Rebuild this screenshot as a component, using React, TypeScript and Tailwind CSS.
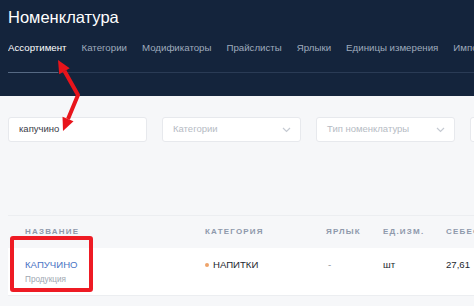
import React from "react";

const tabs = ["Ассортимент", "Категории", "Модификаторы", "Прайслисты", "Ярлыки", "Единицы измерения", "Импорт"];

const Chevron = () => (
  <svg width="9" height="6" viewBox="0 0 9 6" fill="none" stroke="#c5cad2" strokeWidth="1.2">
    <path d="M1 1l3.5 3.5L8 1" />
  </svg>
);

const Select = ({ label }: { label: string }) => (
  <div className="w-[139px] h-[25px] shrink-0 bg-white border border-[#e7e9ed] rounded-[3px] flex items-center justify-between pl-[10px] pr-[9px] overflow-hidden">
    <span className="text-[9.5px] text-[#b6bbc4] whitespace-nowrap">{label}</span>
    <Chevron />
  </div>
);

const App = () => {
  return (
    <div className="relative w-[474px] h-[306px] overflow-hidden bg-[#f6f7f9] font-['Liberation_Sans',Arial,sans-serif]">
      <header className="h-[96px] bg-[#14243c] pl-2 pt-[5px]">
        <h1 className="text-[16.5px] leading-[24px] text-white">Номенклатура</h1>
        <nav className="mt-[12px] flex gap-[15px] whitespace-nowrap text-[9.7px] leading-[14px] overflow-hidden">
          {tabs.map((t, i) => (
            <span key={t} className={i === 0 ? "text-white" : "text-[#9fabbd]"}>
              {t}
            </span>
          ))}
        </nav>
        <div className="mt-[17px] h-px bg-[#2a3b55]">
          <div className="w-[50px] h-px bg-[#566983]" />
        </div>
      </header>

      <div className="flex gap-[15px] px-2 pt-[21px]">
        <div className="w-[139px] h-[25px] shrink-0 bg-white border border-[#e7e9ed] rounded-[3px] flex items-center pl-[10px]">
          <span className="text-[9.5px] text-[#3b4048]">капучино</span>
        </div>
        <Select label="Категории" />
        <Select label="Тип номенклатуры" />
        <Select label="Ярлыки" />
      </div>

      <div className="ml-2 mt-[73px] border-t border-[#eceef1]">
        <div className="grid grid-cols-[197px_121px_57px_63px_1fr] h-[32px] items-center text-[8px] font-bold tracking-[1.2px] text-[#8e99ab] whitespace-nowrap overflow-hidden">
          <span className="pl-[17px]">НАЗВАНИЕ</span>
          <span>КАТЕГОРИЯ</span>
          <span>ЯРЛЫК</span>
          <span>ЕД.ИЗМ.</span>
          <span>СЕБЕСТОИМОСТЬ</span>
        </div>
        <div className="grid grid-cols-[197px_121px_57px_63px_1fr] h-[48px] bg-white border-b border-[#eceef1] text-[9.6px] whitespace-nowrap">
          <div className="pl-[17px] pt-[10px]">
            <div className="text-[#4a74c4] leading-[13px]">КАПУЧИНО</div>
            <div className="text-[8.2px] text-[#a0a7b2] mt-[3px] leading-[12px]">Продукция</div>
          </div>
          <div className="pt-[10px] flex items-start gap-[4px] text-[#23272e] leading-[13px]">
            <span className="mt-[5px] w-[4px] h-[4px] rounded-full bg-[#eea36a]" />
            <span>НАПИТКИ</span>
          </div>
          <div className="pt-[10px] text-[#8b929c] leading-[13px] pl-[2px]">-</div>
          <div className="pt-[10px] text-[#23272e] leading-[13px]">шт</div>
          <div className="pt-[10px] text-[#23272e] leading-[13px]">27,61</div>
        </div>
      </div>

      <div className="absolute left-[10px] top-[236px] w-[83px] h-[56px] border-[4px] border-[#ee1b24] rounded-[3px]" />

      <svg className="absolute left-0 top-0 pointer-events-none" width="474" height="306" viewBox="0 0 474 306">
        <polyline points="64.5,71 78,95 68,119" fill="none" stroke="#e8141b" strokeWidth="4" strokeLinejoin="round" />
        <polygon points="58,60 69.7,68.3 59.2,74.3" fill="#e8141b" />
        <polygon points="63,131 73.5,121.3 62.5,116.7" fill="#e8141b" />
      </svg>
    </div>
  );
};

export default App;
